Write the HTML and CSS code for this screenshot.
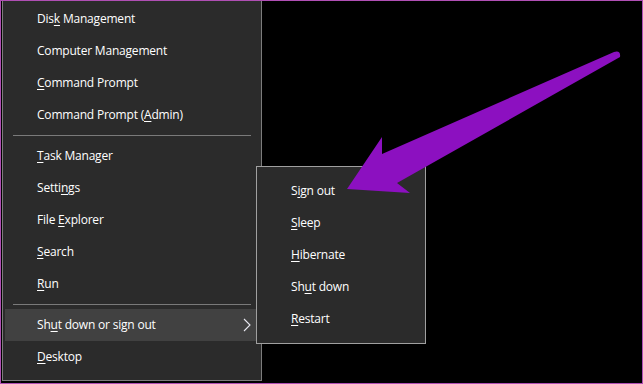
FILE: index.html
```html
<!DOCTYPE html>
<html>
<head>
    <title>Win+X menu</title>
    <link rel="stylesheet" href="styles.css">
</head>
<body>
    <div class="screen">
        <!-- main power user menu -->
        <ul class="menu">
            <li class="item">Dis<u>k</u> Management</li>
            <li class="item">Computer Mana<u>g</u>ement</li>
            <li class="item"><u>C</u>ommand Prompt</li>
            <li class="item">Command Prompt (<u>A</u>dmin)</li>
            <li class="sep"></li>
            <li class="item"><u>T</u>ask Manager</li>
            <li class="item">Setti<u>n</u>gs</li>
            <li class="item">File <u>E</u>xplorer</li>
            <li class="item"><u>S</u>earch</li>
            <li class="item"><u>R</u>un</li>
            <li class="sep"></li>
            <li class="item active">Sh<u>u</u>t down or sign out
                <svg class="chev" width="8" height="14" viewBox="0 0 8 14">
                    <polyline points="1,1 7,7 1,13" fill="none" stroke="#e8e8f0" stroke-width="1.1"/>
                </svg>
            </li>
            <li class="item"><u>D</u>esktop</li>
        </ul>

        <!-- flyout -->
        <ul class="submenu">
            <li class="item">S<u>i</u>gn out</li>
            <li class="item"><u>S</u>leep</li>
            <li class="item"><u>H</u>ibernate</li>
            <li class="item">Sh<u>u</u>t down</li>
            <li class="item"><u>R</u>estart</li>
        </ul>

        <svg class="arrow" width="643" height="384" viewBox="0 0 643 384">
            <path d="M347,189 L382,137 L382,154 L614,52 Q621,50 620,57 L397,183 L410,193 Z" fill="#8c10c0"/>
        </svg>
    </div>
</body>
</html>
```

FILE: styles.css
```css
html, body {
    margin: 0;
    padding: 0;
    background: #000;
}
.screen {
    position: relative;
    width: 643px;
    height: 384px;
    box-sizing: border-box;
    border: 1px solid #b04fb4;
    background: #000;
    overflow: hidden;
    font: 12px "Open Sans", "Noto Sans", sans-serif;
    letter-spacing: -0.2px;
    color: #fff;
}
ul {
    list-style: none;
    margin: 0;
    padding: 0;
}
.menu {
    margin-left: 1px;
    width: 260px;
    height: 380px;
    box-sizing: border-box;
    border: 1px solid #7c7c7c;
    border-top: none;
    background: #2b2b2b;
    padding-top: 2px;
}
.item {
    position: relative;
    height: 32px;
    line-height: 32px;
    padding-left: 34px;
    white-space: nowrap;
}
.item u {
    text-underline-offset: 2px;
}
.sep {
    height: 1px;
    margin: 4px 10px;
    background: #7a7a7a;
}
.active {
    background: #414141;
    margin: 0 2px;
    padding-left: 32px;
}
.chev {
    position: absolute;
    right: 8px;
    top: 9px;
}
.submenu {
    position: absolute;
    left: 255px;
    top: 165px;
    width: 170px;
    height: 178px;
    box-sizing: border-box;
    border: 1px solid #a0a0a0;
    background: #2b2b2b;
    padding-top: 8px;
}
.arrow {
    position: absolute;
    left: -1px;
    top: -1px;
}
```
